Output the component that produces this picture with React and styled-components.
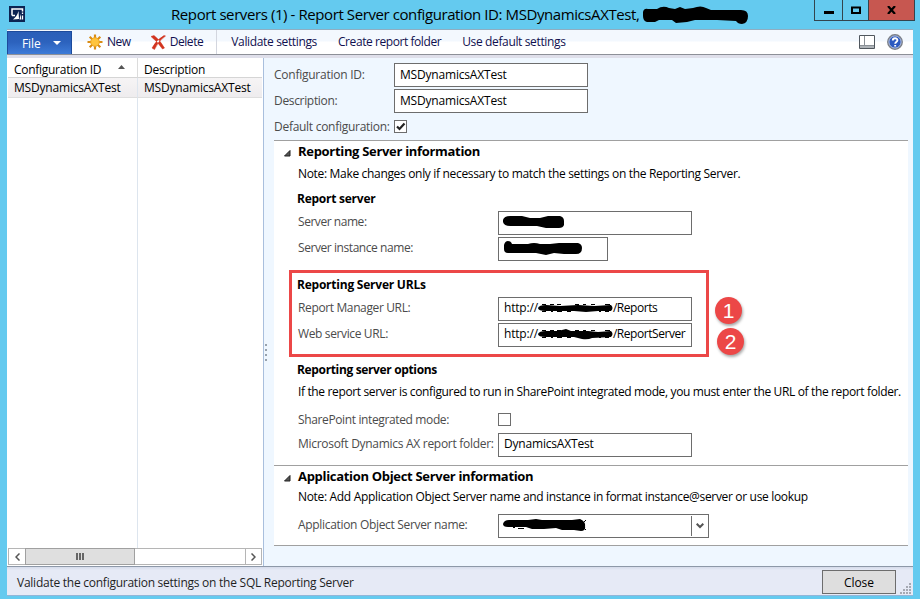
import styled, { createGlobalStyle, css } from "styled-components";

const GlobalStyle = createGlobalStyle`
  * {
    box-sizing: border-box;
  }
  body {
    margin: 0;
    font-family: "Open Sans", "Noto Sans", sans-serif;
    font-size: 12px;
    color: #000;
    overflow: hidden;
  }
`;

const Window = styled.div`
  width: 920px;
  height: 599px;
  display: flex;
  flex-direction: column;
  padding: 0 7px 3px;
  background-color: #64caef;
`;

const TitleBar = styled.header`
  height: 29px;
  flex: none;
  display: flex;
  align-items: flex-start;
`;

const AppIcon = styled.svg`
  flex: none;
  margin: 6px 0 0 2px;
`;

const Title = styled.h1`
  flex: 1;
  display: flex;
  margin: 0 0 0 146px;
  font-size: 15px;
  line-height: 29px;
  font-weight: 400;
  white-space: pre;
  letter-spacing: -0.41px;
`;

const WindowButtons = styled.div`
  display: flex;
  height: 21px;
  margin-right: -2px;
  border: 1px solid #33444d;
  border-top: none;
`;

const WindowButton = styled.button`
  width: ${({ $width }) => $width}px;
  height: 20px;
  display: flex;
  align-items: center;
  justify-content: center;
  padding: ${({ $low }) => ($low ? "5px 0 0" : "0")};
  border: none;
  border-left: ${({ $first }) => ($first ? "none" : "1px solid #33444d")};
  background-color: ${({ $danger }) => ($danger ? "#c75750" : "transparent")};
`;

const Toolbar = styled.nav`
  height: 26px;
  flex: none;
  display: flex;
  align-items: stretch;
  border-top: 1px solid #90adc0;
  border-bottom: 1px solid #8d9098;
  background: linear-gradient(#f3f8fe 0, #f3f8fe 11px, #fff 12px);
`;

const FileButton = styled.button`
  width: 65px;
  height: 23px;
  margin-top: 1px;
  display: flex;
  align-items: center;
  gap: 12px;
  padding: 0 0 0 14px;
  border: 1px solid #1c4a9c;
  border-bottom: none;
  background: linear-gradient(#2a5fb8 0, #2c62bd 10px, #3d7bd8 22px);
  color: #fff;
  font: 12px "Open Sans", sans-serif;
  letter-spacing: -0.1px;
`;

const ToolButton = styled.button`
  display: flex;
  align-items: center;
  gap: ${({ $gap }) => $gap || 0}px;
  margin-left: ${({ $left }) => $left}px;
  padding: 0;
  border: none;
  background: none;
  color: #10104f;
  font: 12px/24px "Open Sans", sans-serif;
  white-space: nowrap;
  letter-spacing: ${({ $track }) => $track || 0}px;
`;

const ToolSeparator = styled.div`
  width: 1px;
  margin-left: 13px;
  background-color: #d3d6df;
`;

const ToolbarEnd = styled.div`
  flex: 1;
  display: flex;
  justify-content: flex-end;
  align-items: center;
  gap: 12px;
  padding-right: 10px;
`;

const Body = styled.main`
  flex: 1;
  display: flex;
  min-height: 0;
  border-top: 3px solid #dfdfea;
`;

const ListPane = styled.section`
  width: 257px;
  flex: none;
  display: flex;
  flex-direction: column;
  border-right: 1px solid #a9bfdd;
  padding: 0 1px 1px;
  background-color: #fff;
`;

const Grid = styled.div`
  flex: 1;
  display: grid;
  grid-template-columns: 130px 1fr;
  grid-template-rows: 20px 20px 1fr;
`;

const HeaderCell = styled.div`
  display: flex;
  align-items: center;
  justify-content: space-between;
  padding: 3px 12px 0 6px;
  border-right: ${({ $last }) => ($last ? "none" : "1px solid #dcdcdc")};
  border-bottom: 1px solid #d5d5d5;
  letter-spacing: -0.28px;

  svg {
    margin-top: -4px;
  }
`;

const Cell = styled.div`
  padding-left: 6px;
  line-height: 20px;
  letter-spacing: -0.19px;
  border-right: ${({ $last }) => ($last ? "none" : "1px solid #dde5ee")};
  ${({ $selected }) =>
    $selected &&
    css`
      border-bottom: 1px solid #dedede;
      background: linear-gradient(#f6f4f5, #eeecee);
    `}
`;

const ScrollBar = styled.div`
  height: 17px;
  flex: none;
  display: flex;
  border: 1px solid #b5b5b5;
`;

const ScrollArrow = styled.div`
  width: 16px;
  display: flex;
  align-items: center;
  justify-content: center;
  ${({ $end }) =>
    $end &&
    css`
      margin-left: auto;
      border-left: 1px solid #b5b5b5;
    `}
`;

const ScrollThumb = styled.div`
  width: 110px;
  margin: -1px 0;
  display: flex;
  align-items: center;
  justify-content: center;
  gap: 1px;
  border: 1px solid #a0a0a0;
  background-color: #dfdfdf;
`;

const Grip = styled.i`
  width: 2px;
  height: 7px;
  background-color: #666;
`;

const Splitter = styled.div`
  width: 10px;
  flex: none;
  display: flex;
  flex-direction: column;
  gap: 3px;
  padding: 286px 0 0 1px;
`;

const SplitterDot = styled.i`
  width: 2px;
  height: 2px;
  background-color: #98a2ad;
`;

const DetailPane = styled.section`
  flex: 1;
  display: flex;
  background-color: #eff7ff;
`;

const Form = styled.form`
  width: 634px;
  padding-top: 5px;
`;

const Section = styled.fieldset`
  display: block;
  margin: 0;
  padding: 0 0 0 24px;
  min-width: 0;
  height: ${({ $height }) => $height}px;
  border: none;
  border-top: 1px solid #a0a0a0;
  border-bottom: ${({ $last }) => ($last ? "1px solid #a0a0a0" : "none")};
  background-color: #fff;
`;

const SectionTitle = styled.h2`
  display: flex;
  align-items: center;
  gap: 7px;
  margin: 0 0 0 -14px;
  height: 20px;
  font-size: 13px;
  font-weight: 700;
  letter-spacing: -0.31px;
  white-space: nowrap;

  svg {
    margin-top: 4px;
  }
`;

const Note = styled.p`
  margin: 0;
  line-height: ${({ $height }) => $height}px;
  white-space: nowrap;
  letter-spacing: ${({ $track }) => $track}px;
`;

const GroupTitle = styled.h3`
  margin: 0 0 ${({ $after }) => $after || 0}px -1px;
  font-size: 12px;
  line-height: ${({ $height }) => $height}px;
  font-weight: 700;
  letter-spacing: ${({ $track }) => $track}px;
`;

const Field = styled.label`
  display: flex;
  height: ${({ $height }) => $height || 24}px;
  align-items: center;
  margin-bottom: ${({ $after }) => ($after === undefined ? 2 : $after)}px;
`;

const Label = styled.span`
  width: ${({ $width }) => $width || 200}px;
  flex: none;
  margin-top: ${({ $shift }) => ($shift === undefined ? -3 : $shift)}px;
  color: #4b4b4b;
  white-space: nowrap;
  letter-spacing: ${({ $track }) => $track || -0.37}px;
`;

const Box = styled.span`
  width: ${({ $width }) => $width || 194}px;
  height: 24px;
  display: flex;
  align-items: center;
  padding: 0 0 ${({ $low }) => ($low ? 2 : 3)}px 5px;
  border: 1px solid #6d6d6d;
  background-color: #fff;
  white-space: pre;
  letter-spacing: -0.19px;
`;

const UrlPath = styled.span`
  letter-spacing: -0.45px;
`;

const ComboButton = styled.span`
  width: 17px;
  height: 20px;
  display: flex;
  align-items: center;
  justify-content: center;
  margin: 3px 0 0 auto;
  border-left: 1px solid #6d6d6d;
`;

const Check = styled.span`
  width: 13px;
  height: 13px;
  display: flex;
  border: 1px solid #6d6d6d;
  background-color: #fff;
`;

const Highlight = styled.div`
  position: relative;
  width: 420px;
  height: 87px;
  margin: 9px 0 0 -9px;
  padding-left: 6px;
  border: 3px solid #ec4747;
`;

const Badge = styled.span`
  position: absolute;
  left: ${({ $left }) => $left}px;
  top: ${({ $top }) => $top}px;
  width: 27px;
  height: 27px;
  border-radius: 50%;
  background-color: #ec4747;
  box-shadow: 1px 2px 3px rgba(0, 0, 0, 0.35);
  color: #fff;
  font: 21px/27px "Liberation Sans", sans-serif;
  text-align: center;
`;

const StatusBar = styled.footer`
  height: 30px;
  flex: none;
  display: flex;
  align-items: flex-start;
  justify-content: space-between;
  padding-left: 10px;
  border-top: 1px solid #8d98a8;
  border-bottom: 1px solid #91b5d8;
  background: linear-gradient(#d5dbea, #e6eaf6 3px);
  line-height: 32px;
  color: #1f1f1f;
  letter-spacing: -0.25px;
`;

const StatusEnd = styled.div`
  display: flex;
  align-items: flex-end;
  gap: 4px;
  padding: 3px 2px 0 0;
`;

const CloseButton = styled.button`
  width: 74px;
  height: 24px;
  padding: 0;
  border: 1px solid #6d6d6d;
  background-color: #dedede;
  font: 12px "Open Sans", sans-serif;
  letter-spacing: -0.1px;
`;

const Scribble = styled.svg`
  flex: none;
  display: block;
  margin: ${({ $margin }) => $margin || "0"};
  overflow: visible;
  fill: #000;
`;

const Collapse = () => (
  <svg width="7" height="7" viewBox="0 0 7 7">
    <path d="M6 .5V6H.5z" fill="#555" stroke="#222" />
  </svg>
);

const UrlScribble = ({ second }) => (
  <Scribble width="75" height="12">
    <path
      d={
        second
          ? "M0 6Q1 3 8 3H20L28 1 33 3H50L60 4 73 3Q76 6 73 9L54 10Q50 12 44 11L36 9H8Q0 9 0 6z"
          : "M0 6Q1 3 8 3L22 4 40 3 56 4 73 3Q76 6 73 9H60L48 10 36 9 24 9H8Q0 9 0 6z"
      }
    />
    <path
      d="M4 2.500h4M12 2.500h4M19 2.500h4M37 2.500h4M45 2.500h3M53 2.500h4M67 2.500h5M4 9.500h4M13 9.500h2M19 9.500h5M29 9.500h4M61 9.500h2M67 9.500h4"
      stroke="#000"
    />
  </Scribble>
);

const App = () => {
  return (
    <>
      <GlobalStyle />
      <Window>
        <TitleBar>
          <AppIcon width="16" height="16" viewBox="0 0 16 16">
            <path d="M0 0h16v16H0z" fill="#0c2352" />
            <path d="M3 9.500V3h10.500v2.500M3 9.500h3" fill="none" stroke="#fff" strokeWidth="1.500" />
            <path d="M4 13.500Q8 10.500 9.500 5L10 13zM10.500 13.500 11.500 8l.8 5.500z" fill="#fff" />
            <path d="M13.500 6.500v1.500M13.500 9.500v4" stroke="#fff" strokeWidth="1.300" />
          </AppIcon>
          <Title>
            Report servers (1) - Report Server configuration ID: MSDynamicsAXTest,{" "}
            <Scribble width="106" height="18" $margin="6px 0 0">
              <path d="M0 6Q1 2 5 3L14 3Q20-1 26 2L32 3 37 1 42 3 50 2Q58-1 63 2L68 4H98Q105 4 105 10 105 17 99 18 95 18 93 15L74 14H52L44 16 33 17 29 14H16L12 16H4Q0 15 0 10z" />
            </Scribble>
          </Title>
          <WindowButtons>
            <WindowButton $width={27} $first $low>
              <svg width="10" height="3">
                <path d="M0 0h10v3H0z" />
              </svg>
            </WindowButton>
            <WindowButton $width={26}>
              <svg width="10" height="8">
                <path d="M1 1.500h8v5.500H1z" fill="none" stroke="#000" strokeWidth="2" />
              </svg>
            </WindowButton>
            <WindowButton $width={46} $danger>
              <svg width="9" height="8">
                <path d="M1 0 8 8M8 0 1 8" stroke="#000" strokeWidth="2.200" />
              </svg>
            </WindowButton>
          </WindowButtons>
        </TitleBar>

        <Toolbar>
          <FileButton>
            File
            <svg width="8" height="4">
              <path d="M0 0h8L4 4z" fill="#fff" />
            </svg>
          </FileButton>
          <ToolButton $left={15} $gap={4} $track={-0.45}>
            <svg width="16" height="16" viewBox="0 0 16 16">
              <path
                d="M8 .5v15M.5 8h15M2.700 2.700l10.600 10.600M13.300 2.700 2.700 13.300"
                stroke="#d98c14"
                strokeWidth="2.200"
              />
              <circle cx="8" cy="8" r="4.300" fill="#ffc43d" stroke="#eda31b" />
            </svg>
            New
          </ToolButton>
          <ToolButton $left={20} $gap={4} $track={-0.45}>
            <svg width="15" height="15" viewBox="0 0 15 15">
              <path
                d="M0 1.500 3 .5Q9 5 13.500 13L11.500 14Q7 7 0 1.500zM14.500 1 13 .5Q5 5 1 13L3.500 14.500Q7 6 14.500 1z"
                fill="#d2341f"
                stroke="#d2341f"
                strokeWidth=".5"
              />
            </svg>
            Delete
          </ToolButton>
          <ToolSeparator />
          <ToolButton $left={14} $track={-0.35}>
            Validate settings
          </ToolButton>
          <ToolButton $left={21} $track={-0.43}>
            Create report folder
          </ToolButton>
          <ToolButton $left={21} $track={-0.36}>
            Use default settings
          </ToolButton>
          <ToolbarEnd>
            <svg width="16" height="14">
              <path d="M.5.5h15v13H.5z" fill="#fff" stroke="#50575e" />
              <path d="M1 10h14v3H1z" fill="#aeb3b8" />
              <path d="M5.500 1v9M1 10.500h14" stroke="#8a9096" />
            </svg>
            <svg width="16" height="16" viewBox="0 0 16 16">
              <circle cx="8" cy="8" r="7.200" fill="#2b59c0" stroke="#7c8088" strokeWidth="1.500" />
              <circle cx="8" cy="8" r="6.100" fill="none" stroke="#d4d9e6" strokeWidth=".8" />
              <path
                d="M5.800 6.500c0-3 4.600-2.800 4.600-.3C10.400 8 8.200 8 8.200 9.700M8.200 11v1.600"
                fill="none"
                stroke="#fff"
                strokeWidth="1.900"
              />
            </svg>
          </ToolbarEnd>
        </Toolbar>

        <Body>
          <ListPane>
            <Grid>
              <HeaderCell>
                Configuration ID
                <svg width="7" height="4">
                  <path d="M3.500 0 7 4H0z" fill="#555" />
                </svg>
              </HeaderCell>
              <HeaderCell $last>Description</HeaderCell>
              <Cell $selected>MSDynamicsAXTest</Cell>
              <Cell $selected $last>
                MSDynamicsAXTest
              </Cell>
              <Cell />
              <Cell $last />
            </Grid>
            <ScrollBar>
              <ScrollArrow>
                <svg width="5" height="8">
                  <path d="M4.500.5 1 4l3.500 3.500" fill="none" stroke="#555" strokeWidth="1.500" />
                </svg>
              </ScrollArrow>
              <ScrollThumb>
                <Grip />
                <Grip />
                <Grip />
              </ScrollThumb>
              <ScrollArrow $end>
                <svg width="5" height="8">
                  <path d="M.5.5 4 4 .5 7.500" fill="none" stroke="#555" strokeWidth="1.500" />
                </svg>
              </ScrollArrow>
            </ScrollBar>
          </ListPane>

          <DetailPane>
            <Splitter>
              <SplitterDot />
              <SplitterDot />
              <SplitterDot />
              <SplitterDot />
            </Splitter>
            <Form>
              <Field>
                <Label $width={120} $shift={-2} $track={-0.25}>
                  Configuration ID:
                </Label>
                <Box $low>MSDynamicsAXTest</Box>
              </Field>
              <Field $after={7}>
                <Label $width={120} $shift={-2} $track={-0.33}>
                  Description:
                </Label>
                <Box $low>MSDynamicsAXTest</Box>
              </Field>
              <Field $height={13} $after={7}>
                <Label $width={120} $shift={0} $track={-0.28}>
                  Default configuration:
                </Label>
                <Check>
                  <svg width="11" height="11">
                    <path d="M2 5.500 4.500 8 9.500 2.500" fill="none" stroke="#222" strokeWidth="2.200" />
                  </svg>
                </Check>
              </Field>

              <Section $height={325}>
                <SectionTitle>
                  <Collapse />
                  Reporting Server information
                </SectionTitle>
                <Note $height={25} $track={-0.325}>
                  Note: Make changes only if necessary to match the settings on the Reporting Server.
                </Note>
                <GroupTitle $height={25} $track={-0.25}>
                  Report server
                </GroupTitle>
                <Field>
                  <Label $track={-0.45}>Server name:</Label>
                  <Box>
                    <Scribble width="62" height="14" $margin="2px 0 0">
                      <path d="M-1 4Q0 0 6 0L18 0 26 2 36 2 44 0H56Q60 1 60 5V9Q59 12 55 12L42 12 33 10H6Q0 10-1 6z" />
                    </Scribble>
                  </Box>
                </Field>
                <Field $after={0}>
                  <Label $track={-0.43}>Server instance name:</Label>
                  <Box $width={110}>
                    <Scribble width="80" height="14" $margin="1px 0 0">
                      <path d="M0 4Q1 0 4 0 7 0 8 3L24 3Q30 1 36 3H46L55 2H74Q78 3 78 7 78 13 72 13L60 13 50 12 42 14 32 12H4Q0 12 0 8z" />
                    </Scribble>
                  </Box>
                </Field>
                <Highlight>
                  <GroupTitle $height={23} $after={1} $track={-0.23}>
                    Reporting Server URLs
                  </GroupTitle>
                  <Field>
                    <Label>Report Manager URL:</Label>
                    <Box>
                      http://
                      <UrlScribble />
                      <UrlPath>/Reports</UrlPath>
                    </Box>
                  </Field>
                  <Field>
                    <Label>Web service URL:</Label>
                    <Box>
                      http://
                      <UrlScribble second />
                      <UrlPath>/ReportServer</UrlPath>
                    </Box>
                  </Field>
                  <Badge $left={423} $top={24}>
                    1
                  </Badge>
                  <Badge $left={425} $top={55}>
                    2
                  </Badge>
                </Highlight>
                <GroupTitle $height={25} $track={-0.35}>
                  Reporting server options
                </GroupTitle>
                <Note $height={19} $track={-0.36}>
                  If the report server is configured to run in SharePoint integrated mode, you must enter the URL of the report folder.
                </Note>
                <Field $height={37} $after={-5}>
                  <Label $shift={0}>SharePoint integrated mode:</Label>
                  <Check />
                </Field>
                <Field>
                  <Label $track={-0.29}>Microsoft Dynamics AX report folder:</Label>
                  <Box>DynamicsAXTest</Box>
                </Field>
              </Section>

              <Section $height={81} $last>
                <SectionTitle>
                  <Collapse />
                  Application Object Server information
                </SectionTitle>
                <Note $height={22} $track={-0.325}>
                  Note: Add Application Object Server name and instance in format instance@server or use lookup
                </Note>
                <Field $height={36}>
                  <Label $track={-0.32}>Application Object Server name:</Label>
                  <Box $width={211}>
                    <Scribble width="84" height="12">
                      <path d="M-1 5Q0 1 5 1H24L32 0 38 1H68L76 0Q82 3 81 7 82 12 77 12L70 11H58L52 9 40 10 28 10 22 8H4Q-1 8-1 5z" />
                      <path d="M9 8.500h2M14 9.500h6M80 3l2-2M80 9l2 2" stroke="#000" />
                    </Scribble>
                    <ComboButton>
                      <svg width="8" height="6">
                        <path d="M.7.7 4 4 7.300.7" fill="none" stroke="#555" strokeWidth="2" />
                      </svg>
                    </ComboButton>
                  </Box>
                </Field>
              </Section>
            </Form>
          </DetailPane>
        </Body>

        <StatusBar>
          Validate the configuration settings on the SQL Reporting Server
          <StatusEnd>
            <CloseButton>Close</CloseButton>
            <svg width="11" height="11" fill="#a5a9b3">
              <path d="M9 0h2v2H9zM6 3h2v2H6zM9 3h2v2H9zM3 6h2v2H3zM6 6h2v2H6zM9 6h2v2H9zM0 9h2v2H0zM3 9h2v2H3zM6 9h2v2H6zM9 9h2v2H9z" />
            </svg>
          </StatusEnd>
        </StatusBar>
      </Window>
    </>
  );
};

export default App;
